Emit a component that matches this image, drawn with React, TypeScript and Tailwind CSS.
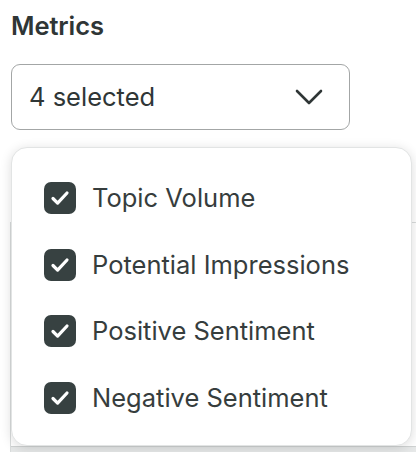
import React from 'react';

const metrics = ['Topic Volume', 'Potential Impressions', 'Positive Sentiment', 'Negative Sentiment'];

function CheckIcon() {
  return (
    <svg viewBox="0 0 24 24" className="w-[24px] h-[24px]" fill="none" stroke="white" strokeWidth={3.2} strokeLinecap="round" strokeLinejoin="round">
      <path d="M5 12.5l4.6 4.6L19 7" />
    </svg>
  );
}

export default function App() {
  return (
    <div className="w-[416px] h-[452px] bg-white overflow-hidden relative" style={{ fontFamily: '"Inter", "Inter Variable", sans-serif' }}>
      <div className="pl-[11px] pt-[11px]">
        <h1 className="text-[25.5px] font-semibold text-[#2f3636] leading-[30px] tracking-[-0.1px]">Metrics</h1>
        <button className="mt-[23px] w-[339px] h-[66px] border-[1.5px] border-[#a3a6a6] rounded-[9px] flex items-center justify-between pl-[17px] pr-[26px] text-[#2f3636]">
          <span className="text-[25.5px] leading-none">4 selected</span>
          <svg viewBox="0 0 28 16" className="w-[28px] h-[16px]" fill="none" stroke="#2f3636" strokeWidth={2.6} strokeLinecap="round" strokeLinejoin="round">
            <path d="M2 2l12 12L26 2" />
          </svg>
        </button>
      </div>

      {/* table underneath the menu */}
      <div className="absolute left-[10px] top-[222px] w-[420px] h-[240px] border-l border-t border-[#d9dcdc]">
        <div className="absolute left-0 right-0 bottom-0 h-[16px] bg-[#e6e8e8] border-t border-[#d0d3d3]" />
      </div>

      <div className="absolute left-[11px] top-[147px] w-[401px] h-[299px] bg-white rounded-[16px] border border-[#e2e4e4] shadow-[0_2px_12px_rgba(0,0,0,0.14)] pt-[34px] pl-[32px] flex flex-col gap-[34.5px]">
        {metrics.map((m) => (
          <label key={m} className="flex items-center gap-[16px] h-[32px]">
            <span className="w-[32px] h-[32px] rounded-[7px] bg-[#374141] flex items-center justify-center">
              <CheckIcon />
            </span>
            <span className="text-[25.5px] text-[#363d3d] leading-none">{m}</span>
          </label>
        ))}
      </div>
    </div>
  );
}
